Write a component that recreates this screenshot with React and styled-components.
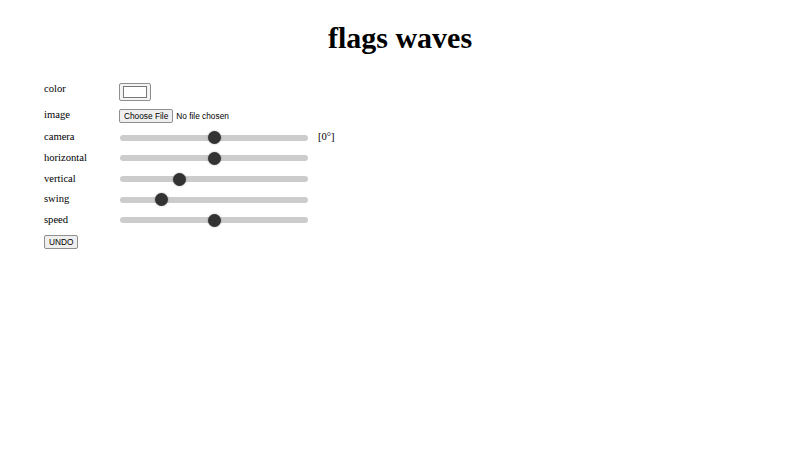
import React, { useState } from 'react';
import styled, { createGlobalStyle } from 'styled-components';

const GlobalStyle = createGlobalStyle`
    body {
        margin: 0;
        background: #fff;
        color: #000;
        font-family: "Liberation Serif", "Times New Roman", serif;
    }
`;

export const Page = styled.div`
    padding: 21px 44px 0;
`;

export const Title = styled.h1`
    margin: 0 0 27px;
    text-align: center;
    font-size: 30px;
    font-weight: bold;
    line-height: 1.15;
`;

export const Panel = styled.div`
    display: flex;
    flex-direction: column;
    align-items: flex-start;
    gap: 7.7px;
`;

export const Row = styled.div`
    display: grid;
    grid-template-columns: 75px 189px auto;
    align-items: start;
    margin-top: ${props => props.$shift || 0}px;
`;

export const Label = styled.label`
    font-size: 10.6px;
    line-height: 12px;
`;

export const Readout = styled.span`
    font-size: 10.6px;
    line-height: 12px;
    padding-left: 10px;
`;

export const ColorInput = styled.input.attrs({ type: 'color' })`
    -webkit-appearance: none;
    appearance: none;
    box-sizing: border-box;
    width: 32px;
    height: 18px;
    margin: 0;
    padding: 2px 3px;
    border: 1px solid #8f8f8f;
    border-radius: 2px;
    background: #f4f4f4;
    cursor: pointer;

    &::-webkit-color-swatch-wrapper {
        padding: 0;
    }
    &::-webkit-color-swatch {
        border: 1px solid #777;
        border-radius: 0;
    }
`;

export const FileInput = styled.input.attrs({ type: 'file' })`
    margin: 0;
    font-family: "Liberation Sans", Arial, sans-serif;
    font-size: 8.3px;
    color: #000;

    &::file-selector-button {
        font: inherit;
        margin: 0 3px 0 0;
        padding: 1px 4px;
        border: 1px solid #8f8f8f;
        border-radius: 2px;
        background: #efefef;
        color: #000;
    }
`;

export const Slider = styled.input.attrs({ type: 'range' })`
    -webkit-appearance: none;
    appearance: none;
    width: 188px;
    height: 13px;
    margin: 0 0 0 1px;
    background: transparent;

    &::-webkit-slider-runnable-track {
        height: 6px;
        background: #ccc;
        border-radius: 3px;
    }
    &::-webkit-slider-thumb {
        -webkit-appearance: none;
        appearance: none;
        width: 13px;
        height: 13px;
        margin-top: -3.5px;
        border-radius: 50%;
        background: #333;
        box-shadow: 0 0 2px rgba(0, 0, 0, 0.35);
    }
`;

export const Button = styled.button`
    margin: 0;
    padding: 1px 4px;
    font-family: "Liberation Sans", Arial, sans-serif;
    font-size: 8.3px;
    border: 1px solid #8f8f8f;
    border-radius: 2px;
    background: #efefef;
    color: #000;
`;

const initial = { camera: 50, horizontal: 50, vertical: 30, swing: 20, speed: 50 };

const App = () => {
    const [values, setValues] = useState(initial);
    const [history, setHistory] = useState([]);

    const update = (name) => (e) => {
        setHistory(h => [...h, values]);
        setValues({ ...values, [name]: Number(e.target.value) });
    };

    const undo = () => {
        if (!history.length) return;
        setValues(history[history.length - 1]);
        setHistory(history.slice(0, -1));
    };

    const angle = Math.round((values.camera - 50) * 3.6);

    return (
        <Page>
            <GlobalStyle />
            <Title>flags waves</Title>
            <Panel>
                <Row>
                    <Label>color</Label>
                    <ColorInput defaultValue="#ffffff" />
                </Row>
                <Row $shift={1}>
                    <Label>image</Label>
                    <FileInput accept="image/*" />
                </Row>
                {Object.keys(initial).map((name, i) => (
                    <Row key={name} $shift={i === 0 ? 0.3 : 0}>
                        <Label>{name}</Label>
                        <Slider min="0" max="100" value={values[name]} onChange={update(name)} />
                        {name === 'camera' && <Readout>[{angle}°]</Readout>}
                    </Row>
                ))}
                <Button onClick={undo}>UNDO</Button>
            </Panel>
        </Page>
    );
};

export default App;
